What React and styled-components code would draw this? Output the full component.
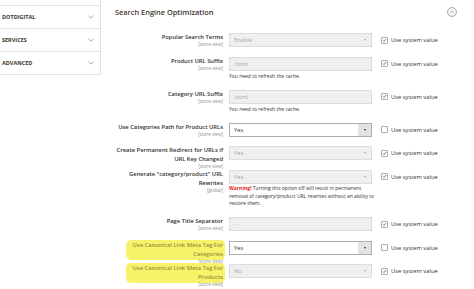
import React from "react";
import styled, { createGlobalStyle } from "styled-components";

const GlobalStyle = createGlobalStyle`
  html, body {
    margin: 0;
    padding: 0;
    background: #fff;
  }
  body {
    font-family: "Open Sans", "Liberation Sans", sans-serif;
    color: #303030;
  }
`;

const sections = ["DOTDIGITAL", "SERVICES", "ADVANCED"];

const fields = [
  { label: ["Popular Search Terms"], scope: "[store view]", type: "select", value: "Enable", disabled: true, checked: true },
  { label: ["Product URL Suffix"], scope: "[store view]", type: "text", value: ".html", disabled: true, checked: true, note: "You need to refresh the cache." },
  { label: ["Category URL Suffix"], scope: "[store view]", type: "text", value: ".html", disabled: true, checked: true, note: "You need to refresh the cache." },
  { label: ["Use Categories Path for Product URLs"], scope: "[store view]", type: "select", value: "Yes", disabled: false, checked: false },
  { label: ["Create Permanent Redirect for URLs if", "URL Key Changed"], scope: "[store view]", type: "select", value: "Yes", disabled: true, checked: true },
  {
    label: ["Generate \"category/product\" URL", "Rewrites"],
    scope: "[global]",
    type: "select",
    value: "Yes",
    disabled: true,
    checked: true,
    warning: "Turning this option off will result in permanent removal of category/product URL rewrites without an ability to restore them.",
  },
  { label: ["Page Title Separator"], scope: "[store view]", type: "text", value: "-", disabled: true, checked: true },
  { label: ["Use Canonical Link Meta Tag For", "Categories"], scope: "[store view]", type: "select", value: "Yes", disabled: false, checked: false, marked: true },
  { label: ["Use Canonical Link Meta Tag For", "Products"], scope: "[store view]", type: "select", value: "No", disabled: true, checked: true, marked: true },
];

function ChevronDown() {
  return (
    <svg width="6" height="4" viewBox="0 0 6 4">
      <polyline points="0.5,0.8 3,3.2 5.5,0.8" fill="none" stroke="#8a8a8a" strokeWidth="0.8" />
    </svg>
  );
}

function CollapseIcon() {
  return (
    <svg width="10" height="10" viewBox="0 0 10 10">
      <circle cx="5" cy="5" r="4.4" fill="none" stroke="#8a8a8a" strokeWidth="0.8" />
      <polyline points="3,5.8 5,3.8 7,5.8" fill="none" stroke="#8a8a8a" strokeWidth="0.8" />
    </svg>
  );
}

function CheckMark() {
  return (
    <svg width="7" height="7" viewBox="0 0 7 7">
      <polyline points="1.3,3.6 2.8,5.1 5.8,1.4" fill="none" stroke="#514943" strokeWidth="1.1" />
    </svg>
  );
}

function Field({ field }) {
  const text = field.label.map((line, i) => (
    <React.Fragment key={i}>
      {i > 0 && <br />}
      {line}
    </React.Fragment>
  ));
  return (
    <Row>
      <LabelCol>
        {field.marked ? <Marker>{text}</Marker> : <LabelText>{text}</LabelText>}
        <Scope>{field.scope}</Scope>
      </LabelCol>
      <ControlCol>
        <Control $disabled={field.disabled}>
          <Value $disabled={field.disabled}>{field.value}</Value>
          {field.type === "select" && (
            <Arrow $disabled={field.disabled}>
              <Triangle $disabled={field.disabled} />
            </Arrow>
          )}
        </Control>
        {field.note && <Note>{field.note}</Note>}
        {field.warning && (
          <Warning>
            <strong>Warning!</strong> {field.warning}
          </Warning>
        )}
      </ControlCol>
      <UseSystem>
        <Box>{field.checked && <CheckMark />}</Box>
        Use system value
      </UseSystem>
    </Row>
  );
}

export default function App() {
  return (
    <>
      <GlobalStyle />
      <Page>
        <Sidebar>
          {sections.map((s) => (
            <SideItem key={s}>
              {s}
              <ChevronDown />
            </SideItem>
          ))}
        </Sidebar>
        <Main>
          <Header>
            <Title>Search Engine Optimization</Title>
            <CollapseIcon />
          </Header>
          <Fieldset>
            {fields.map((f, i) => (
              <Field key={i} field={f} />
            ))}
          </Fieldset>
        </Main>
      </Page>
    </>
  );
}

const Page = styled.div`
  display: flex;
  width: 474px;
  height: 289px;
  overflow: hidden;
`;

const Sidebar = styled.nav`
  width: 100px;
  flex: none;
  align-self: flex-start;
  padding-top: 5px;
  border-right: 1px solid #e3e3e3;
`;

const SideItem = styled.div`
  display: flex;
  align-items: center;
  justify-content: space-between;
  height: 22px;
  padding: 0 6px 0 2px;
  border-top: 1px solid #e3e3e3;
  font-size: 5.5px;
  font-weight: 700;
  color: #41362f;
  &:last-child {
    border-bottom: 1px solid #e3e3e3;
  }
`;

const Main = styled.main`
  flex: 1;
  display: flex;
  flex-direction: column;
`;

const Header = styled.div`
  display: flex;
  align-items: center;
  justify-content: space-between;
  padding: 7px 17px 0 14px;
  height: 10px;
  margin-bottom: 16px;
`;

const Title = styled.h2`
  margin: 0;
  font-size: 7.4px;
  font-weight: 600;
  color: #41362f;
`;

const Fieldset = styled.div`
  display: flex;
  flex-direction: column;
`;

const Row = styled.div`
  display: grid;
  grid-template-columns: 122px 143px auto;
  column-gap: 6px;
  align-items: start;
  margin-bottom: 9.5px;
`;

const LabelCol = styled.div`
  height: 14px;
  text-align: right;
  font-size: 5.8px;
  font-weight: 600;
  line-height: 9px;
  white-space: nowrap;
`;

const LabelText = styled.span`
  display: inline-block;
  color: #303030;
`;

const Marker = styled.span`
  display: inline-block;
  padding: 1px 2px 1px 7px;
  margin: -1px -2px -1px 0;
  border-radius: 5px;
  background: #f6f36b;
  color: #9c8f3c;
`;

const Scope = styled.div`
  font-size: 4.6px;
  font-weight: 400;
  line-height: 5px;
  color: #909090;
`;

const ControlCol = styled.div`
  display: flex;
  flex-direction: column;
`;

const Control = styled.div`
  display: flex;
  align-items: stretch;
  box-sizing: border-box;
  height: 14px;
  border: 1px solid ${(p) => (p.$disabled ? "#dcdcdc" : "#adadad")};
  background: ${(p) => (p.$disabled ? "#efefef" : "#fff")};
`;

const Value = styled.span`
  flex: 1;
  display: flex;
  align-items: center;
  padding-left: 4px;
  font-size: 5.8px;
  color: ${(p) => (p.$disabled ? "#a8a8a8" : "#303030")};
`;

const Arrow = styled.span`
  width: 13px;
  display: flex;
  align-items: center;
  justify-content: center;
  background: ${(p) => (p.$disabled ? "transparent" : "#e3e3e3")};
`;

const Triangle = styled.span`
  width: 0;
  height: 0;
  border-left: 1.6px solid transparent;
  border-right: 1.6px solid transparent;
  border-top: 2px solid ${(p) => (p.$disabled ? "#a8a8a8" : "#303030")};
`;

const Note = styled.div`
  margin-top: 2px;
  font-size: 5px;
  line-height: 7.5px;
  color: #303030;
`;

const Warning = styled.div`
  width: 146px;
  margin-top: 1.5px;
  font-size: 5px;
  line-height: 7.5px;
  color: #303030;
  strong {
    color: #e22626;
    font-weight: 700;
  }
`;

const UseSystem = styled.label`
  display: flex;
  align-items: center;
  gap: 3px;
  height: 14px;
  padding-left: 3px;
  font-size: 5.8px;
  color: #303030;
`;

const Box = styled.span`
  display: flex;
  align-items: center;
  justify-content: center;
  box-sizing: border-box;
  width: 7px;
  height: 7px;
  border: 0.8px solid #adadad;
  border-radius: 1px;
  background: #fff;
`;
